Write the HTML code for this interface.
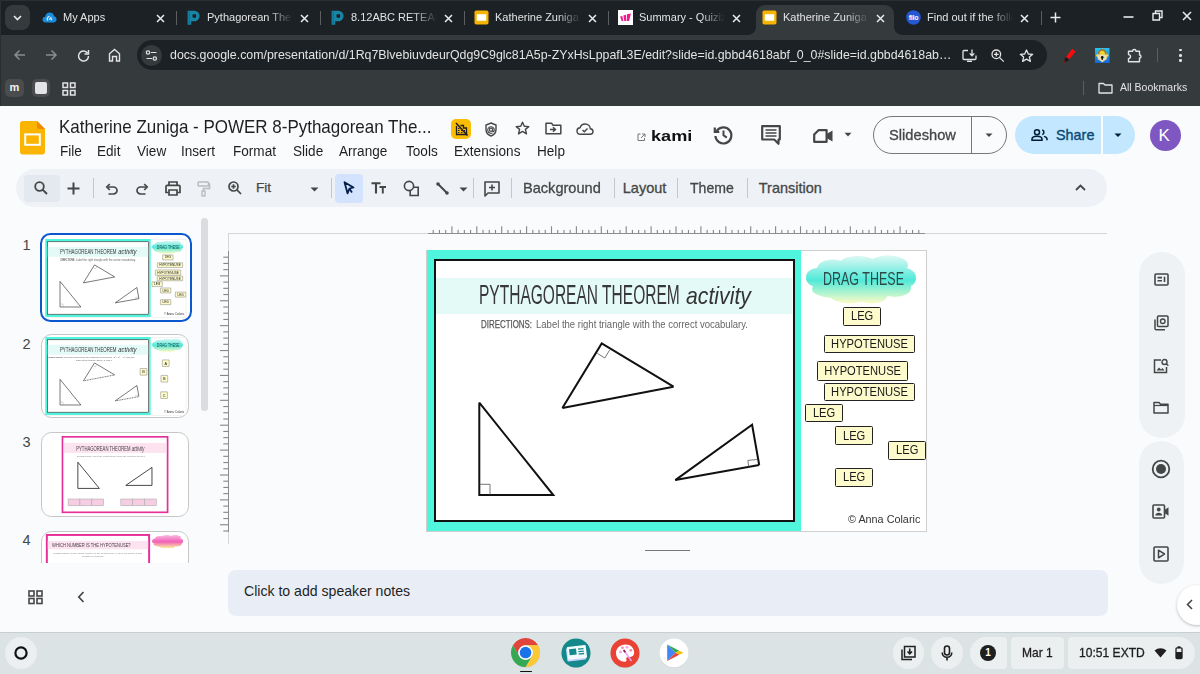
<!DOCTYPE html>
<html><head><meta charset="utf-8"><style>
*{box-sizing:border-box;margin:0;padding:0}
html,body{width:1200px;height:674px;overflow:hidden;background:#f9fbfd;font-family:"Liberation Sans",sans-serif}
.a{position:absolute}
.t{position:absolute;white-space:nowrap;line-height:1}
svg{position:absolute;overflow:visible}
</style></head><body>
<div class="a" style="left:0px;top:0px;width:1200px;height:35px;background:#1b2124;border-radius:0;"></div>
<div class="a" style="left:0px;top:0px;width:1200px;height:1px;background:#2a2f31;border-radius:0;"></div>
<div class="a" style="left:0px;top:0px;width:1px;height:35px;background:#2a2f31;border-radius:0;"></div>
<div class="a" style="left:5px;top:5px;width:25px;height:25px;background:#353a3d;border-radius:8px;"></div>
<svg style="left:13px;top:15px" width="9" height="6" viewBox="0 0 9 6"><path d="M1 1L4.5 4.5L8 1" fill="none" stroke="#e8eaed" stroke-width="1.6"/></svg>
<div class="a" style="left:756px;top:5px;width:138px;height:31px;background:#353a3d;border-radius:9px 9px 0 0;"></div>
<div class="a" style="left:748px;top:27px;width:8px;height:8px;background:radial-gradient(circle at 0 0,transparent 7.5px,#353a3d 8.2px)"></div>
<div class="a" style="left:894px;top:27px;width:8px;height:8px;background:radial-gradient(circle at 100% 0,transparent 7.5px,#353a3d 8.2px)"></div>
<svg style="left:42px;top:10px" width="16" height="15" viewBox="0 0 16 15"><path d="M3.5 12.5C1.6 12.5 0.5 11.2 0.5 9.6C0.5 8 1.7 6.9 3.2 6.8C3.5 4.3 5.3 2.5 7.8 2.5C10.1 2.5 11.8 4.1 12.2 6.2C13.6 6.5 14.6 7.7 14.6 9.3C14.6 11.1 13.2 12.5 11.4 12.5Z" fill="#1a8ce0"/><path d="M5.5 10.5C5 9 5.8 7 7.5 6.3M7 9.6L9.4 7.3M8.8 10.2L10 8.6" stroke="#dff0ff" stroke-width="1.2" fill="none"/></svg>
<div class="t" style="left:63px;top:11.6px;font-size:11px;color:#e3e3e3;width:86px;overflow:hidden;-webkit-mask-image:linear-gradient(90deg,#000 72%,transparent 100%)">My Apps</div>
<svg style="left:156px;top:14px" width="9" height="9" viewBox="0 0 9 9"><path d="M1 1L8 8M8 1L1 8" stroke="#e8eaed" stroke-width="1.5"/></svg>
<svg style="left:186px;top:10px" width="15" height="15" viewBox="0 0 15 15"><path d="M1.6 0.8H8.4A5.2 5.2 0 0 1 8.4 11.2H5.2V14.8H1.6Z" fill="#1984a6"/><circle cx="8.3" cy="6" r="2" fill="#1b2124"/><path d="M3.3 1.5V14" stroke="#106b88" stroke-width="0.8"/></svg>
<div class="t" style="left:207px;top:11.6px;font-size:11px;color:#e3e3e3;width:86px;overflow:hidden;-webkit-mask-image:linear-gradient(90deg,#000 72%,transparent 100%)">Pythagorean The</div>
<svg style="left:300px;top:14px" width="9" height="9" viewBox="0 0 9 9"><path d="M1 1L8 8M8 1L1 8" stroke="#e8eaed" stroke-width="1.5"/></svg>
<svg style="left:330px;top:10px" width="15" height="15" viewBox="0 0 15 15"><path d="M1.6 0.8H8.4A5.2 5.2 0 0 1 8.4 11.2H5.2V14.8H1.6Z" fill="#1984a6"/><circle cx="8.3" cy="6" r="2" fill="#1b2124"/><path d="M3.3 1.5V14" stroke="#106b88" stroke-width="0.8"/></svg>
<div class="t" style="left:351px;top:11.6px;font-size:11px;color:#e3e3e3;width:86px;overflow:hidden;-webkit-mask-image:linear-gradient(90deg,#000 72%,transparent 100%)">8.12ABC RETEACH</div>
<svg style="left:444px;top:14px" width="9" height="9" viewBox="0 0 9 9"><path d="M1 1L8 8M8 1L1 8" stroke="#e8eaed" stroke-width="1.5"/></svg>
<svg style="left:474px;top:10px" width="15" height="15" viewBox="0 0 15 15"><rect x="0.5" y="0.5" width="14" height="14" rx="1.8" fill="#f6b400"/><rect x="2.8" y="4.2" width="9.4" height="6.6" fill="#fff"/></svg>
<div class="t" style="left:495px;top:11.6px;font-size:11px;color:#e3e3e3;width:86px;overflow:hidden;-webkit-mask-image:linear-gradient(90deg,#000 72%,transparent 100%)">Katherine Zuniga</div>
<svg style="left:588px;top:14px" width="9" height="9" viewBox="0 0 9 9"><path d="M1 1L8 8M8 1L1 8" stroke="#e8eaed" stroke-width="1.5"/></svg>
<svg style="left:618px;top:10px" width="15" height="15" viewBox="0 0 15 15"><rect x="0" y="0" width="15" height="15" fill="#fff"/><path d="M2.1 6.6L4.3 6L5.3 10.9L3.7 10.9Z M5.4 5.4L7.9 4.8L8.2 10.9L6.3 10.9Z M8.9 4.2L12.9 3.6L11.1 10.9L8.8 10.9Z" fill="#f2178d"/></svg>
<div class="t" style="left:639px;top:11.6px;font-size:11px;color:#e3e3e3;width:86px;overflow:hidden;-webkit-mask-image:linear-gradient(90deg,#000 72%,transparent 100%)">Summary - Quizizz</div>
<svg style="left:732px;top:14px" width="9" height="9" viewBox="0 0 9 9"><path d="M1 1L8 8M8 1L1 8" stroke="#e8eaed" stroke-width="1.5"/></svg>
<svg style="left:762px;top:10px" width="15" height="15" viewBox="0 0 15 15"><rect x="0.5" y="0.5" width="14" height="14" rx="1.8" fill="#f6b400"/><rect x="2.8" y="4.2" width="9.4" height="6.6" fill="#fff"/></svg>
<div class="t" style="left:783px;top:11.6px;font-size:11px;color:#e3e3e3;width:86px;overflow:hidden;-webkit-mask-image:linear-gradient(90deg,#000 72%,transparent 100%)">Katherine Zuniga</div>
<svg style="left:876px;top:14px" width="9" height="9" viewBox="0 0 9 9"><path d="M1 1L8 8M8 1L1 8" stroke="#e8eaed" stroke-width="1.5"/></svg>
<svg style="left:906px;top:10px" width="15" height="15" viewBox="0 0 15 15"><circle cx="7.5" cy="7.5" r="7.3" fill="#2358d2"/><text x="7.6" y="10" font-size="7" font-family="Liberation Sans" font-weight="bold" fill="#fff" text-anchor="middle" letter-spacing="-0.2">filo</text></svg>
<div class="t" style="left:927px;top:11.6px;font-size:11px;color:#e3e3e3;width:86px;overflow:hidden;-webkit-mask-image:linear-gradient(90deg,#000 72%,transparent 100%)">Find out if the following</div>
<svg style="left:1020px;top:14px" width="9" height="9" viewBox="0 0 9 9"><path d="M1 1L8 8M8 1L1 8" stroke="#e8eaed" stroke-width="1.5"/></svg>
<div class="a" style="left:176px;top:11px;width:1px;height:14px;background:#5b5f62;border-radius:0;"></div>
<div class="a" style="left:320px;top:11px;width:1px;height:14px;background:#5b5f62;border-radius:0;"></div>
<div class="a" style="left:464px;top:11px;width:1px;height:14px;background:#5b5f62;border-radius:0;"></div>
<div class="a" style="left:608px;top:11px;width:1px;height:14px;background:#5b5f62;border-radius:0;"></div>
<div class="a" style="left:1041px;top:11px;width:1px;height:14px;background:#5b5f62;border-radius:0;"></div>
<svg style="left:1050px;top:12px" width="11" height="11" viewBox="0 0 11 11"><path d="M5.5 0.5V10.5M0.5 5.5H10.5" stroke="#e8eaed" stroke-width="1.5"/></svg>
<svg style="left:1123px;top:16px" width="11" height="2" viewBox="0 0 11 2"><path d="M0.5 1H10.5" stroke="#e8eaed" stroke-width="1.6"/></svg>
<svg style="left:1152px;top:10px" width="11" height="11" viewBox="0 0 11 11"><path d="M1 3.5H7.5V10H1Z M3.5 3.5V1H10V7.5H7.5" fill="none" stroke="#e8eaed" stroke-width="1.4"/></svg>
<svg style="left:1182px;top:11px" width="10" height="10" viewBox="0 0 10 10"><path d="M1 1L9 9M9 1L1 9" stroke="#e8eaed" stroke-width="1.6"/></svg>
<div class="a" style="left:0px;top:35px;width:1200px;height:71px;background:#353a3d;border-radius:0;"></div>
<div class="a" style="left:0px;top:35px;width:1px;height:71px;background:#2a2e30;border-radius:0;"></div>
<svg style="left:13px;top:49px" width="13" height="12" viewBox="0 0 13 12"><path d="M12 6H2M6.5 1.5L2 6L6.5 10.5" fill="none" stroke="#8a8d90" stroke-width="1.5"/></svg>
<svg style="left:45px;top:49px" width="13" height="12" viewBox="0 0 13 12"><path d="M1 6H11M6.5 1.5L11 6L6.5 10.5" fill="none" stroke="#8a8d90" stroke-width="1.5"/></svg>
<svg style="left:77px;top:49px" width="13" height="13" viewBox="0 0 13 13"><path d="M10.6 4.2A5 5 0 1 0 11.5 7" fill="none" stroke="#e3e3e3" stroke-width="1.5"/><path d="M11.5 1V5H7.5" fill="none" stroke="#e3e3e3" stroke-width="1.5"/></svg>
<svg style="left:108px;top:48px" width="13" height="14" viewBox="0 0 13 14"><path d="M1.5 13V5.8L6.5 1.5L11.5 5.8V13H8.5V8.5H4.5V13Z" fill="none" stroke="#e3e3e3" stroke-width="1.4"/></svg>
<div class="a" style="left:137px;top:40px;width:910px;height:30px;background:#1b2124;border-radius:15px;"></div>
<div class="a" style="left:141px;top:45px;width:21px;height:21px;background:#353a3d;border-radius:50%;"></div>
<svg style="left:145px;top:49px" width="13" height="13" viewBox="0 0 13 13"><circle cx="3" cy="3.5" r="1.7" fill="none" stroke="#e3e3e3" stroke-width="1.2"/><path d="M6 3.5H11.5M1.5 9.5H7" stroke="#e3e3e3" stroke-width="1.2"/><circle cx="9.8" cy="9.5" r="1.7" fill="none" stroke="#e3e3e3" stroke-width="1.2"/></svg>
<div class="t" style="left:169.5px;top:48.09px;font-size:13.6px;color:#e3e3e3;font-weight:normal;transform:scaleX(0.91);transform-origin:0 0;">docs.google.com/presentation/d/1Rq7BlvebiuvdeurQdg9C9glc81A5p-ZYxHsLppafL3E/edit?slide=id.gbbd4618abf_0_0#slide=id.gbbd4618ab…</div>
<svg style="left:962px;top:49px" width="16" height="13" viewBox="0 0 16 13"><path d="M6 1.5H2C1.5 1.5 1 2 1 2.5V9.5C1 10 1.5 10.5 2 10.5H13C13.5 10.5 14 10 14 9.5V6.5" fill="none" stroke="#e3e3e3" stroke-width="1.3"/><path d="M5 12.3H10" stroke="#e3e3e3" stroke-width="1.4"/><path d="M10 0.5V6.5M7.7 4.4L10 6.8L12.3 4.4" fill="none" stroke="#e3e3e3" stroke-width="1.3"/></svg>
<svg style="left:991px;top:49px" width="14" height="13" viewBox="0 0 14 13"><circle cx="5.3" cy="5.3" r="4.3" fill="none" stroke="#e3e3e3" stroke-width="1.3"/><path d="M8.4 8.4L12.8 12.6M5.3 3V7.6M3 5.3H7.6" stroke="#e3e3e3" stroke-width="1.3"/></svg>
<svg style="left:1019px;top:49px" width="15" height="13" viewBox="0 0 15 13"><path d="M7.5 1L9.3 5L13.7 5.3L10.4 8.1L11.4 12.4L7.5 10.1L3.6 12.4L4.6 8.1L1.3 5.3L5.7 5Z" fill="none" stroke="#e3e3e3" stroke-width="1.3" stroke-linejoin="round"/></svg>
<svg style="left:1064px;top:48px" width="12" height="15" viewBox="0 0 12 15"><path d="M8.3 0.8L11.6 3.4L5.2 11.6L1.9 9Z" fill="#f50d0d"/><path d="M1.9 9L5.2 11.6L3.2 13.6L0.6 12.9L0.9 10.4Z" fill="#1a1a1a"/><path d="M0.6 12.9L0.3 14.3L1.8 14" stroke="#8c1014" stroke-width="1"/></svg>
<svg style="left:1094.5px;top:48px" width="14.5" height="15" viewBox="0 0 14.5 15"><defs><linearGradient id="lkbg" x1="0" y1="0" x2="0" y2="1"><stop offset="0" stop-color="#27c4f4"/><stop offset="1" stop-color="#1766d6"/></linearGradient></defs><rect x="0" y="0" width="14.5" height="15" fill="url(#lkbg)"/><path d="M7.25 0.5L13.8 7.5L7.25 14.5L0.7 7.5Z" fill="#f3d32a"/><path d="M3.8 7V5.3A3.45 3.45 0 0 1 10.7 5.3V7" fill="none" stroke="#9b7a3a" stroke-width="1.6"/><path d="M2.8 6.5H11.7V11.3L7.25 14L2.8 11.3Z" fill="#eadcae"/><circle cx="7.25" cy="9.2" r="1.3" fill="#111"/><path d="M7.25 9.5V12" stroke="#111" stroke-width="1.2"/></svg>
<svg style="left:1127px;top:48.5px" width="15" height="14" viewBox="0 0 15 14"><path d="M1.5 2.2H5.6A1.7 1.7 0 0 1 9 2.2H12.5V6A1.5 1.5 0 0 1 12.5 9V12.8H1.5V9.6A2 2 0 0 0 1.5 5.6Z" fill="none" stroke="#e3e3e3" stroke-width="1.4" stroke-linejoin="round"/></svg>
<div class="a" style="left:1157px;top:48px;width:1px;height:14px;background:#5b5f62;border-radius:0;"></div>
<div class="a" style="left:1179.3px;top:48.7px;width:2.7px;height:2.7px;border-radius:50%;background:#e3e3e3"></div>
<div class="a" style="left:1179.3px;top:54.0px;width:2.7px;height:2.7px;border-radius:50%;background:#e3e3e3"></div>
<div class="a" style="left:1179.3px;top:59.2px;width:2.7px;height:2.7px;border-radius:50%;background:#e3e3e3"></div>
<div class="a" style="left:5px;top:79px;width:19px;height:18px;background:#4a4c4e;border-radius:5px;"></div>
<div class="t" style="left:9.5px;top:81.99px;font-size:11px;color:#fff;font-weight:normal;"><b style="color:#f1f1f1">m</b></div>
<div class="a" style="left:32px;top:79px;width:18px;height:18px;background:#4a4c4e;border-radius:5px;"></div>
<div class="a" style="left:35px;top:82px;width:12px;height:12px;background:#e1e3e6;border-radius:2px;"></div>
<svg style="left:62px;top:82px" width="14" height="14" viewBox="0 0 14 14"><rect x="1" y="1" width="4.5" height="4.5" fill="none" stroke="#e3e3e3" stroke-width="1.5"/><rect x="8.5" y="1" width="4.5" height="4.5" fill="none" stroke="#e3e3e3" stroke-width="1.5"/><rect x="1" y="8.5" width="4.5" height="4.5" fill="none" stroke="#e3e3e3" stroke-width="1.5"/><rect x="8.5" y="8.5" width="4.5" height="4.5" fill="none" stroke="#e3e3e3" stroke-width="1.5"/></svg>
<div class="a" style="left:1083px;top:81px;width:1px;height:14px;background:#5b5f62;border-radius:0;"></div>
<svg style="left:1098px;top:82px" width="15" height="12" viewBox="0 0 15 12"><path d="M1 1.5H5.5L7 3H14V11H1Z" fill="none" stroke="#e3e3e3" stroke-width="1.3" stroke-linejoin="round"/></svg>
<div class="t" style="left:1119.5px;top:82.18px;font-size:11.3px;color:#e3e3e3;font-weight:normal;transform:scaleX(0.93);transform-origin:0 0;">All Bookmarks</div>
<div class="a" style="left:0px;top:106px;width:1200px;height:526px;background:#f9fbfd;border-radius:0;"></div>
<svg style="left:20px;top:121px" width="25" height="34" viewBox="0 0 25 34"><path d="M2.5 0H17L25 8V31C25 32.4 23.9 33.5 22.5 33.5H2.5C1.1 33.5 0 32.4 0 31V2.5C0 1.1 1.1 0 2.5 0Z" fill="#fbb400"/><path d="M17 0L25 8H19C17.9 8 17 7.1 17 6Z" fill="#f08a00"/><rect x="5.2" y="13.4" width="14.6" height="10.4" fill="none" stroke="#fff" stroke-width="2"/></svg>
<div class="t" style="left:59px;top:119.18px;font-size:17.8px;color:#1f1f1f;font-weight:normal;transform:scaleX(0.955);transform-origin:0 0;">Katherine Zuniga - POWER 8-Pythagorean The...</div>
<div class="t" style="left:60px;top:144.45px;font-size:14px;color:#1f1f1f;font-weight:normal;transform:scaleX(0.97);transform-origin:0 0;">File</div>
<div class="t" style="left:97px;top:144.45px;font-size:14px;color:#1f1f1f;font-weight:normal;transform:scaleX(0.97);transform-origin:0 0;">Edit</div>
<div class="t" style="left:137px;top:144.45px;font-size:14px;color:#1f1f1f;font-weight:normal;transform:scaleX(0.97);transform-origin:0 0;">View</div>
<div class="t" style="left:181px;top:144.45px;font-size:14px;color:#1f1f1f;font-weight:normal;transform:scaleX(0.97);transform-origin:0 0;">Insert</div>
<div class="t" style="left:233px;top:144.45px;font-size:14px;color:#1f1f1f;font-weight:normal;transform:scaleX(0.97);transform-origin:0 0;">Format</div>
<div class="t" style="left:293px;top:144.45px;font-size:14px;color:#1f1f1f;font-weight:normal;transform:scaleX(0.97);transform-origin:0 0;">Slide</div>
<div class="t" style="left:339px;top:144.45px;font-size:14px;color:#1f1f1f;font-weight:normal;transform:scaleX(0.97);transform-origin:0 0;">Arrange</div>
<div class="t" style="left:406px;top:144.45px;font-size:14px;color:#1f1f1f;font-weight:normal;transform:scaleX(0.97);transform-origin:0 0;">Tools</div>
<div class="t" style="left:454px;top:144.45px;font-size:14px;color:#1f1f1f;font-weight:normal;transform:scaleX(0.97);transform-origin:0 0;">Extensions</div>
<div class="t" style="left:537px;top:144.45px;font-size:14px;color:#1f1f1f;font-weight:normal;transform:scaleX(0.97);transform-origin:0 0;">Help</div>
<div class="a" style="left:451px;top:119px;width:20px;height:20px;background:#fbbc04;border-radius:5px;"></div>
<svg style="left:455px;top:122px" width="13" height="14" viewBox="0 0 13 14"><path d="M1.5 4V12.5H11.5V6H8.5V3.5H5.5" fill="none" stroke="#1f1f1f" stroke-width="1.3"/><path d="M3 6.5H4.5M3 8.5H4.5M3 10.5H4.5M6 8.5H7.5M6 10.5H7.5M9 8.5H10" stroke="#1f1f1f" stroke-width="1.2"/><path d="M1 1L12.5 13.5" stroke="#1f1f1f" stroke-width="1.5"/></svg>
<svg style="left:485px;top:122px" width="12" height="15" viewBox="0 0 12 15"><path d="M6 1L11 3V7.5C11 10.5 8.8 13 6 14C3.2 13 1 10.5 1 7.5V3Z" fill="none" stroke="#444746" stroke-width="1.4"/><circle cx="6" cy="7.8" r="1.6" fill="none" stroke="#444746" stroke-width="1.2"/><path d="M7.6 7.8V9C7.6 10 9.3 10 9.3 8.2A3.3 3.3 0 1 0 7.5 11" fill="none" stroke="#444746" stroke-width="1.1"/></svg>
<svg style="left:515px;top:121px" width="15" height="14" viewBox="0 0 15 14"><path d="M7.5 1.2L9.3 5.3L13.8 5.6L10.4 8.4L11.5 12.8L7.5 10.4L3.5 12.8L4.6 8.4L1.2 5.6L5.7 5.3Z" fill="none" stroke="#444746" stroke-width="1.4" stroke-linejoin="round"/></svg>
<svg style="left:545px;top:122px" width="17" height="13" viewBox="0 0 17 13"><path d="M1 2V11.8H15.8V3.3H8L6.6 1.2H1Z" fill="none" stroke="#444746" stroke-width="1.5" stroke-linejoin="round"/><path d="M5 7.5H10M8 5.3L10.4 7.5L8 9.7" fill="none" stroke="#444746" stroke-width="1.5"/></svg>
<svg style="left:576px;top:123px" width="18" height="12" viewBox="0 0 18 12"><path d="M4.5 11.2C2.5 11.2 1 9.8 1 7.9C1 6.1 2.4 4.8 4.1 4.7C4.8 2.5 6.8 1 9.1 1C11.9 1 14.1 3.1 14.3 5.7C15.9 5.9 17 7.1 17 8.5C17 10 15.8 11.2 14.2 11.2Z" fill="none" stroke="#444746" stroke-width="1.4"/><path d="M6.5 7L8.3 8.7L11.5 5.5" fill="none" stroke="#444746" stroke-width="1.4"/></svg>
<svg style="left:637px;top:133px" width="9" height="8" viewBox="0 0 9 8"><path d="M3.5 1H1V7.5H7.5V5M5 1H8V4M8 1L4 5" fill="none" stroke="#777" stroke-width="1"/></svg>
<div class="t" style="left:650.5px;top:127.68px;font-size:15.5px;color:#111;font-weight:bold;transform:scaleX(1.17);transform-origin:0 0;">kami</div>
<svg style="left:713px;top:125px" width="21" height="20" viewBox="0 0 21 20"><path d="M3.6 6.2A8 8 0 1 1 2.4 11" fill="none" stroke="#444746" stroke-width="2.2"/><path d="M1.8 2.5V7H6.3" fill="none" stroke="#444746" stroke-width="2.2"/><path d="M10.5 5.5V10.2L13.8 12.6" fill="none" stroke="#444746" stroke-width="2"/></svg>
<svg style="left:761px;top:125px" width="21" height="20" viewBox="0 0 21 20"><path d="M1.2 1.2H18.8V14.5H17.5V18.8L13.2 14.5H1.2Z" fill="none" stroke="#444746" stroke-width="2.2" stroke-linejoin="round"/><path d="M4.5 5H15.5M4.5 8H15.5M4.5 11H15.5" stroke="#444746" stroke-width="1.6"/></svg>
<svg style="left:813px;top:129px" width="21" height="14" viewBox="0 0 21 14"><path d="M5.5 1.2H13.6V12.8H1.2V5.5Z" fill="none" stroke="#444746" stroke-width="2.2" stroke-linejoin="round"/><path d="M13.6 5L19.5 1.5V12.5L13.6 9Z" fill="#444746"/></svg>
<svg style="left:844px;top:132px" width="8" height="5" viewBox="0 0 8 5"><path d="M0.5 0.8H7.5L4 4.5Z" fill="#444746"/></svg>
<div class="a" style="left:873px;top:116px;width:134px;height:38px;border:1px solid #747775;border-radius:19px"></div>
<div class="a" style="left:971px;top:116px;width:1px;height:38px;background:#747775;border-radius:0;"></div>
<div class="t" style="left:889.3px;top:128.21px;font-size:14.4px;color:#444746;font-weight:normal;transform:scaleX(1.02);transform-origin:0 0;-webkit-text-stroke:0.3px #444746">Slideshow</div>
<svg style="left:984.5px;top:133px" width="8" height="5" viewBox="0 0 8 5"><path d="M0.5 0.5H7.5L4 4Z" fill="#444746"/></svg>
<div class="a" style="left:1015px;top:116px;width:120px;height:38px;background:#c2e7ff;border-radius:19px;"></div>
<div class="a" style="left:1101px;top:116px;width:1.5px;height:38px;background:#f9fbfd;border-radius:0;"></div>
<svg style="left:1031px;top:129px" width="17" height="12" viewBox="0 0 17 12"><circle cx="6" cy="3.3" r="2.5" fill="none" stroke="#001d35" stroke-width="1.5"/><path d="M1 11.2V10C1 8.2 3 7.2 6 7.2C9 7.2 11 8.2 11 10V11.2Z" fill="none" stroke="#001d35" stroke-width="1.5"/><path d="M11.2 1A2.4 2.4 0 0 1 11.2 5.6M13 7.4C14.8 7.9 16 8.8 16 10V11.2" fill="none" stroke="#001d35" stroke-width="1.5"/></svg>
<div class="t" style="left:1056px;top:128.01px;font-size:14.4px;color:#0b4a75;font-weight:normal;-webkit-text-stroke:0.35px #0b4a75">Share</div>
<svg style="left:1114px;top:133px" width="8" height="5" viewBox="0 0 8 5"><path d="M0.5 0.5H7.5L4 4Z" fill="#001d35"/></svg>
<div class="a" style="left:1150px;top:119.5px;width:31px;height:31px;background:#7e57c2;border-radius:50%;"></div>
<div class="t" style="left:1158.5px;top:127.11px;font-size:17px;color:#fff;font-weight:normal;">K</div>
<div class="a" style="left:16px;top:169px;width:1091px;height:38px;background:#eef1f6;border-radius:19px;"></div>
<div class="a" style="left:24px;top:175px;width:36px;height:27px;background:#e4e8ef;border-radius:4px;"></div>
<svg style="left:34px;top:181px" width="14" height="14" viewBox="0 0 14 14"><circle cx="5.5" cy="5.5" r="4.3" fill="none" stroke="#444746" stroke-width="1.8"/><path d="M8.6 8.6L13 13" stroke="#444746" stroke-width="2"/></svg>
<svg style="left:67px;top:182px" width="13" height="13" viewBox="0 0 13 13"><path d="M6.5 0.5V12.5M0.5 6.5H12.5" stroke="#444746" stroke-width="2"/></svg>
<div class="a" style="left:92.5px;top:178px;width:1px;height:20px;background:#c7c7c7;border-radius:0;"></div>
<svg style="left:105px;top:183px" width="13" height="12" viewBox="0 0 13 12"><path d="M3 4H8.5A3.5 3.5 0 0 1 8.5 11H3.5" fill="none" stroke="#444746" stroke-width="1.7"/><path d="M4.8 1L1.8 4L4.8 7" fill="none" stroke="#444746" stroke-width="1.7"/></svg>
<svg style="left:136px;top:183px" width="13" height="12" viewBox="0 0 13 12"><path d="M10 4H4.5A3.5 3.5 0 0 0 4.5 11H9.5" fill="none" stroke="#444746" stroke-width="1.7"/><path d="M8.2 1L11.2 4L8.2 7" fill="none" stroke="#444746" stroke-width="1.7"/></svg>
<svg style="left:165px;top:181px" width="16" height="15" viewBox="0 0 16 15"><path d="M4 4.5V1H12V4.5" fill="none" stroke="#444746" stroke-width="1.7"/><path d="M3.5 11.5H1V5.5C1 4.9 1.5 4.4 2.1 4.4H13.9C14.5 4.4 15 4.9 15 5.5V11.5H12.5" fill="none" stroke="#444746" stroke-width="1.7"/><path d="M4 9H12V14H4Z" fill="none" stroke="#444746" stroke-width="1.7"/></svg>
<svg style="left:197px;top:181px" width="13" height="16" viewBox="0 0 13 16"><rect x="1" y="1" width="10.5" height="4" rx="0.8" fill="none" stroke="#b9bcbe" stroke-width="1.5"/><path d="M11.5 3H12.5V7.5H6.5V10" fill="none" stroke="#b9bcbe" stroke-width="1.5"/><rect x="5" y="10" width="3" height="5" rx="0.6" fill="none" stroke="#b9bcbe" stroke-width="1.4"/></svg>
<svg style="left:228px;top:181px" width="14" height="14" viewBox="0 0 14 14"><circle cx="5.5" cy="5.5" r="4.5" fill="none" stroke="#444746" stroke-width="1.7"/><path d="M8.7 8.7L13 13M5.5 3.2V7.8M3.2 5.5H7.8" stroke="#444746" stroke-width="1.7"/></svg>
<div class="t" style="left:256px;top:181.19px;font-size:13.6px;color:#444746;font-weight:normal;-webkit-text-stroke:0.25px #444746">Fit</div>
<svg style="left:309.5px;top:186.5px" width="9" height="5" viewBox="0 0 9 5"><path d="M0.5 0.5H8.5L4.5 4.5Z" fill="#444746"/></svg>
<div class="a" style="left:330.5px;top:178px;width:1px;height:20px;background:#c7c7c7;border-radius:0;"></div>
<div class="a" style="left:335px;top:174px;width:28px;height:28.5px;background:#d3e3fd;border-radius:4px;"></div>
<svg style="left:343px;top:181px" width="12" height="14" viewBox="0 0 12 14"><path d="M1.5 1.2L10.5 6.5L6.5 7.5L4.5 12.3Z" fill="none" stroke="#041e49" stroke-width="1.8" stroke-linejoin="round"/><path d="M6.3 7.5L9 11.5" stroke="#041e49" stroke-width="1.8"/></svg>
<svg style="left:371px;top:182px" width="16" height="12" viewBox="0 0 16 12"><path d="M0.5 1.2H9.5M5 1.2V11.5" stroke="#444746" stroke-width="2.1"/><path d="M8.5 5H15M11.8 5V11.5" stroke="#444746" stroke-width="1.9"/></svg>
<svg style="left:403px;top:180px" width="17" height="17" viewBox="0 0 17 17"><circle cx="6" cy="6" r="4.6" fill="none" stroke="#444746" stroke-width="1.6"/><path d="M10 7.3H15.2V15.5H7.2V10.5" fill="none" stroke="#444746" stroke-width="1.6"/></svg>
<svg style="left:436px;top:182px" width="13" height="13" viewBox="0 0 13 13"><path d="M2 2L11 11" stroke="#444746" stroke-width="2"/><circle cx="2" cy="2" r="1.8" fill="#444746"/><circle cx="11" cy="11" r="1.8" fill="#444746"/></svg>
<svg style="left:458.5px;top:186.5px" width="9" height="5" viewBox="0 0 9 5"><path d="M0.5 0.5H8.5L4.5 4.5Z" fill="#444746"/></svg>
<div class="a" style="left:473px;top:178px;width:1px;height:20px;background:#c7c7c7;border-radius:0;"></div>
<svg style="left:483.5px;top:181px" width="16" height="16" viewBox="0 0 16 16"><path d="M1 1H15V12H4L1 15Z" fill="none" stroke="#444746" stroke-width="1.6" stroke-linejoin="round"/><path d="M8 3.5V9.5M5 6.5H11" stroke="#444746" stroke-width="1.6"/></svg>
<div class="a" style="left:510.5px;top:178px;width:1px;height:20px;background:#c7c7c7;border-radius:0;"></div>
<div class="t" style="left:523.3px;top:180.73px;font-size:14.5px;color:#444746;font-weight:normal;transform:scaleX(1.005);transform-origin:0 0;-webkit-text-stroke:0.3px #444746">Background</div>
<div class="a" style="left:613.5px;top:178px;width:1px;height:20px;background:#c7c7c7;border-radius:0;"></div>
<div class="t" style="left:622.8px;top:180.73px;font-size:14.5px;color:#444746;font-weight:normal;-webkit-text-stroke:0.3px #444746">Layout</div>
<div class="a" style="left:677px;top:178px;width:1px;height:20px;background:#c7c7c7;border-radius:0;"></div>
<div class="t" style="left:689.8px;top:180.73px;font-size:14.5px;color:#444746;font-weight:normal;transform:scaleX(0.97);transform-origin:0 0;-webkit-text-stroke:0.3px #444746">Theme</div>
<div class="a" style="left:746.5px;top:178px;width:1px;height:20px;background:#c7c7c7;border-radius:0;"></div>
<div class="t" style="left:758.8px;top:180.73px;font-size:14.5px;color:#444746;font-weight:normal;-webkit-text-stroke:0.3px #444746">Transition</div>
<svg style="left:1075px;top:184px" width="11" height="7" viewBox="0 0 11 7"><path d="M1 6L5.5 1.5L10 6" fill="none" stroke="#444746" stroke-width="1.8"/></svg>
<div class="t" style="left:22.5px;top:237.93px;font-size:14.5px;color:#444746;font-weight:normal;">1</div>
<div class="t" style="left:22.5px;top:337.03px;font-size:14.5px;color:#444746;font-weight:normal;">2</div>
<div class="t" style="left:22.5px;top:434.93px;font-size:14.5px;color:#444746;font-weight:normal;">3</div>
<div class="t" style="left:22.5px;top:533.03px;font-size:14.5px;color:#444746;font-weight:normal;">4</div>
<div class="a" style="left:40px;top:233px;width:151.5px;height:89.00px;"><div class="a" style="left:0;top:0;width:151.5px;height:89px;border:2.8px solid #0b57d0;border-radius:10.5px;background:#fff"></div><div class="a" style="left:2.8px;top:2.8px;width:145.90px;height:83.40px;border-radius:7.70px;overflow:hidden"><div class="a" style="left:2.30px;top:3.10px;width:501px;height:282px;transform:scale(0.2818,0.2775);transform-origin:0 0"><div class="a" style="left:0;top:0;width:501px;height:282px;background:#fff;border:1px solid #cfcfcf"></div><div class="a" style="left:1px;top:0px;width:374px;height:281px;background:#50f5de"></div><div class="a" style="left:8px;top:9px;width:361px;height:263px;background:#fff;border:2.2px solid #111"></div><div class="a" style="left:10px;top:28px;width:356px;height:35.5px;background:#e3faf7"></div><div class="t" style="left:53.3px;top:32.1px;font-size:27px;color:#383838;transform:scaleX(0.575);transform-origin:0 0">PYTHAGOREAN THEOREM</div><div class="t" style="left:260px;top:33.9px;font-size:24px;color:#333;font-style:italic;transform:scaleX(0.885);transform-origin:0 0">activity</div><div class="t" style="left:54.9px;top:69.1px;font-size:11px;color:#555;-webkit-text-stroke:0.25px #555;transform:scaleX(0.72);transform-origin:0 0">DIRECTIONS:</div><div class="t" style="left:109.6px;top:69.1px;font-size:11px;color:#666;transform:scaleX(0.865);transform-origin:0 0">Label the right triangle with the correct vocabulary.</div><svg style="left:0;top:0" width="501" height="282" viewBox="0 0 501 282"><g stroke-miterlimit="2.5"><path d="M53.3 152.7V245H127.3Z" fill="none" stroke="#111" stroke-width="2"/><path d="M53.8 234.3H64V244.5" fill="none" stroke="#666" stroke-width="0.9"/><path d="M136.4 158.1L175.7 93.4L247.5 136.7" fill="none" stroke="#111" stroke-width="2"/><path d="M136.4 158.1L247.5 136.7" fill="none" stroke="#111" stroke-width="2"/><path d="M171.4 103.4L178.75 108L183.7 100" fill="none" stroke="#666" stroke-width="0.9"/><path d="M249.3 230.1L326.1 174.8L333.2 215" fill="none" stroke="#111" stroke-width="2"/><path d="M249.3 230.1L333.2 215" fill="none" stroke="#111" stroke-width="2"/><path d="M321.9 210.4L331.3 209.5M322.6 216.5L321.9 210.4" fill="none" stroke="#666" stroke-width="0.9"/></g></svg><svg style="left:379.7px;top:4.5px" width="110" height="50" viewBox="0 0 110 50"><defs><linearGradient id="cg379450e9d9" gradientUnits="userSpaceOnUse" x1="0" y1="2" x2="0" y2="48"><stop offset="0" stop-color="#d6f7f3"/><stop offset="0.5" stop-color="#50e9d9"/><stop offset="1" stop-color="#fafbc6"/></linearGradient></defs><g fill="url(#cg379450e9d9)"><ellipse cx="55" cy="23" rx="50" ry="16"/><ellipse cx="27" cy="14" rx="16" ry="9.5"/><ellipse cx="52" cy="10" rx="20" ry="9"/><ellipse cx="82" cy="10" rx="20" ry="9.5"/><ellipse cx="11" cy="22.5" rx="11" ry="9.5"/><ellipse cx="99" cy="23" rx="11" ry="10"/><ellipse cx="28" cy="34" rx="22" ry="9"/><ellipse cx="62" cy="36" rx="26" ry="8.5"/><ellipse cx="89" cy="33" rx="16" ry="9"/><ellipse cx="44" cy="40" rx="20" ry="8.5"/><ellipse cx="66" cy="41" rx="15" ry="7.5"/></g></svg><div class="t" style="left:397.3px;top:19.7px;font-size:18.5px;color:#2b4a47;transform:scaleX(0.675);transform-origin:0 0">DRAG THESE</div><div class="a" style="left:417.3px;top:57px;width:38.2px;height:18.8px;background:#fdfacb;border:1.4px solid #222;border-radius:1.5px"></div><div class="t" style="left:417.3px;top:60.43px;width:42.44px;text-align:center;font-size:12.4px;color:#1a1a1a;transform:scaleX(0.9);transform-origin:0 0">LEG</div><div class="a" style="left:397.6px;top:84.5px;width:91px;height:18.4px;background:#fdfacb;border:1.4px solid #222;border-radius:1.5px"></div><div class="t" style="left:397.6px;top:87.73px;width:101.11px;text-align:center;font-size:12.4px;color:#1a1a1a;transform:scaleX(0.9);transform-origin:0 0">HYPOTENUSE</div><div class="a" style="left:390.5px;top:111px;width:91.2px;height:19.7px;background:#fdfacb;border:1.4px solid #222;border-radius:1.5px"></div><div class="t" style="left:390.5px;top:114.88px;width:101.33px;text-align:center;font-size:12.4px;color:#1a1a1a;transform:scaleX(0.9);transform-origin:0 0">HYPOTENUSE</div><div class="a" style="left:397.5px;top:132.5px;width:91px;height:18.5px;background:#fdfacb;border:1.4px solid #222;border-radius:1.5px"></div><div class="t" style="left:397.5px;top:135.78px;width:101.11px;text-align:center;font-size:12.4px;color:#1a1a1a;transform:scaleX(0.9);transform-origin:0 0">HYPOTENUSE</div><div class="a" style="left:379.4px;top:153.5px;width:38.1px;height:18.7px;background:#fdfacb;border:1.4px solid #222;border-radius:1.5px"></div><div class="t" style="left:379.4px;top:156.88px;width:42.33px;text-align:center;font-size:12.4px;color:#1a1a1a;transform:scaleX(0.9);transform-origin:0 0">LEG</div><div class="a" style="left:408.7px;top:176.2px;width:38.2px;height:19.2px;background:#fdfacb;border:1.4px solid #222;border-radius:1.5px"></div><div class="t" style="left:408.7px;top:179.83px;width:42.44px;text-align:center;font-size:12.4px;color:#1a1a1a;transform:scaleX(0.9);transform-origin:0 0">LEG</div><div class="a" style="left:461.6px;top:190.9px;width:38.4px;height:18.7px;background:#fdfacb;border:1.4px solid #222;border-radius:1.5px"></div><div class="t" style="left:461.6px;top:194.28px;width:42.67px;text-align:center;font-size:12.4px;color:#1a1a1a;transform:scaleX(0.9);transform-origin:0 0">LEG</div><div class="a" style="left:408.7px;top:218.1px;width:38.2px;height:18.7px;background:#fdfacb;border:1.4px solid #222;border-radius:1.5px"></div><div class="t" style="left:408.7px;top:221.48px;width:42.44px;text-align:center;font-size:12.4px;color:#1a1a1a;transform:scaleX(0.9);transform-origin:0 0">LEG</div><div class="t" style="left:421.6px;top:263.6px;font-size:10.5px;color:#333;transform:scaleX(1.03);transform-origin:0 0">© Anna Colaric</div></div></div></div>
<div class="a" style="left:41.4px;top:334px;width:148px;height:84.00px;"><div class="a" style="left:0;top:0;width:148px;height:84px;border:1px solid #c4c7c5;border-radius:10.5px;background:#fff"></div><div class="a" style="left:1px;top:1px;width:146.00px;height:82.00px;border-radius:9.50px;overflow:hidden"><div class="a" style="left:2.70px;top:2.30px;width:501px;height:282px;transform:scale(0.2818,0.2775);transform-origin:0 0"><div class="a" style="left:0;top:0;width:501px;height:282px;background:#fff;border:1px solid #cfcfcf"></div><div class="a" style="left:1px;top:0px;width:374px;height:281px;background:#50f5de"></div><div class="a" style="left:8px;top:9px;width:361px;height:263px;background:#fff;border:2.2px solid #111"></div><div class="a" style="left:10px;top:28px;width:356px;height:35.5px;background:#e3faf7"></div><div class="t" style="left:53.3px;top:32.1px;font-size:27px;color:#383838;transform:scaleX(0.575);transform-origin:0 0">PYTHAGOREAN THEOREM</div><div class="t" style="left:260px;top:33.9px;font-size:24px;color:#333;font-style:italic;transform:scaleX(0.885);transform-origin:0 0">activity</div><div class="t" style="left:12px;top:68px;font-size:9px;color:#5a5a5a;transform:scaleX(0.9);transform-origin:0 0"><b>DIRECTIONS:</b> Using the formula for the Pythagorean Theorem, a² + b² = c², label the</div><div class="t" style="left:110px;top:78px;font-size:9px;color:#5a5a5a;transform:scaleX(0.9);transform-origin:0 0">sides of the triangle with a, b, and c.</div><svg style="left:0;top:0" width="501" height="282" viewBox="0 0 501 282"><g stroke-miterlimit="2.5"><path d="M53.3 152.7V245H127.3Z" fill="none" stroke="#111" stroke-width="2"/><path d="M53.8 234.3H64V244.5" fill="none" stroke="#666" stroke-width="0.9"/><path d="M136.4 158.1L175.7 93.4L247.5 136.7" fill="none" stroke="#111" stroke-width="2"/><path d="M136.4 158.1L247.5 136.7" fill="none" stroke="#111" stroke-width="2" stroke-dasharray="4 2"/><path d="M171.4 103.4L178.75 108L183.7 100" fill="none" stroke="#666" stroke-width="0.9"/><path d="M249.3 230.1L326.1 174.8L333.2 215" fill="none" stroke="#111" stroke-width="2"/><path d="M249.3 230.1L333.2 215" fill="none" stroke="#111" stroke-width="2" stroke-dasharray="4 2"/><path d="M321.9 210.4L331.3 209.5M322.6 216.5L321.9 210.4" fill="none" stroke="#666" stroke-width="0.9"/></g></svg><svg style="left:379.7px;top:4.5px" width="110" height="50" viewBox="0 0 110 50"><defs><linearGradient id="cg379450e9d9" gradientUnits="userSpaceOnUse" x1="0" y1="2" x2="0" y2="48"><stop offset="0" stop-color="#d6f7f3"/><stop offset="0.5" stop-color="#50e9d9"/><stop offset="1" stop-color="#fafbc6"/></linearGradient></defs><g fill="url(#cg379450e9d9)"><ellipse cx="55" cy="23" rx="50" ry="16"/><ellipse cx="27" cy="14" rx="16" ry="9.5"/><ellipse cx="52" cy="10" rx="20" ry="9"/><ellipse cx="82" cy="10" rx="20" ry="9.5"/><ellipse cx="11" cy="22.5" rx="11" ry="9.5"/><ellipse cx="99" cy="23" rx="11" ry="10"/><ellipse cx="28" cy="34" rx="22" ry="9"/><ellipse cx="62" cy="36" rx="26" ry="8.5"/><ellipse cx="89" cy="33" rx="16" ry="9"/><ellipse cx="44" cy="40" rx="20" ry="8.5"/><ellipse cx="66" cy="41" rx="15" ry="7.5"/></g></svg><div class="t" style="left:397.3px;top:19.7px;font-size:18.5px;color:#2b4a47;transform:scaleX(0.675);transform-origin:0 0">DRAG THESE</div><div class="a" style="left:416px;top:82px;width:25px;height:25px;background:#fdfacb;border:1.4px solid #222;border-radius:1.5px"></div><div class="t" style="left:416px;top:87.76px;width:25.00px;text-align:center;font-size:14px;color:#1a1a1a;transform:scaleX(1.0);transform-origin:0 0">A</div><div class="a" style="left:411px;top:138px;width:25px;height:25px;background:#fdfacb;border:1.4px solid #222;border-radius:1.5px"></div><div class="t" style="left:411px;top:143.76px;width:25.00px;text-align:center;font-size:14px;color:#1a1a1a;transform:scaleX(1.0);transform-origin:0 0">B</div><div class="a" style="left:410px;top:197px;width:25px;height:25px;background:#fdfacb;border:1.4px solid #222;border-radius:1.5px"></div><div class="t" style="left:410px;top:202.76px;width:25.00px;text-align:center;font-size:14px;color:#1a1a1a;transform:scaleX(1.0);transform-origin:0 0">C</div><div class="a" style="left:337px;top:113px;width:25px;height:25px;background:#fdfacb;border:1.4px solid #222;border-radius:1.5px"></div><div class="t" style="left:337px;top:118.76px;width:25.00px;text-align:center;font-size:14px;color:#1a1a1a;transform:scaleX(1.0);transform-origin:0 0">B</div><div class="t" style="left:421.6px;top:263.6px;font-size:10.5px;color:#333;transform:scaleX(1.03);transform-origin:0 0">© Anna Colaric</div></div></div></div>
<div class="a" style="left:41.4px;top:432px;width:148px;height:85.30px;"><div class="a" style="left:0;top:0;width:148px;height:85.3px;border:1px solid #c4c7c5;border-radius:10.5px;background:#fff"></div><div class="a" style="left:1px;top:1px;width:146.00px;height:83.30px;border-radius:9.50px;overflow:hidden"><div class="a" style="left:2.70px;top:2.50px;width:501px;height:282px;transform:scale(0.2818,0.2775);transform-origin:0 0"><div class="a" style="left:0;top:0;width:501px;height:282px;background:#fff"></div><div class="a" style="left:59px;top:0px;width:379px;height:278px;background:#fff;border:6px solid #e5309a"></div><div class="a" style="left:68px;top:25px;width:362px;height:36px;background:#fde2f0"></div><div class="t" style="left:111px;top:33px;font-size:24px;color:#444;transform:scaleX(0.62);transform-origin:0 0">PYTHAGOREAN THEOREM <i>activity</i></div><div class="t" style="left:113px;top:68px;font-size:9px;color:#888;transform:scaleX(0.93);transform-origin:0 0">DIRECTIONS: Label the right triangle using the numbers below it.</div><svg style="left:0;top:0" width="501" height="282" viewBox="0 0 501 282"><path d="M116.6 94.4V188.9H192.9Z M286.6 178L379.6 113.1V178Z" fill="none" stroke="#333" stroke-width="3.2"/><g fill="#f6cde3" stroke="#aaa" stroke-width="2"><rect x="82" y="227" width="42" height="24"/><rect x="124" y="227" width="42" height="24"/><rect x="166" y="227" width="42" height="24"/><rect x="269" y="227" width="42" height="24"/><rect x="311" y="227" width="42" height="24"/><rect x="353" y="227" width="42" height="24"/></g></svg></div></div></div>
<div class="a" style="left:41.4px;top:530.5px;width:148px;height:32.00px;overflow:hidden;"><div class="a" style="left:0;top:0;width:148px;height:85px;border:1px solid #c4c7c5;border-radius:10.5px;background:#fff"></div><div class="a" style="left:1px;top:1px;width:146.00px;height:83.00px;border-radius:9.50px;overflow:hidden"><div class="a" style="left:2.70px;top:2.50px;width:501px;height:282px;transform:scale(0.2818,0.2775);transform-origin:0 0"><div class="a" style="left:0;top:0;width:501px;height:282px;background:#fff"></div><div class="a" style="left:2.5px;top:0px;width:370px;height:270px;background:#fff;border:7px solid #e5309a"></div><div class="a" style="left:10px;top:24.6px;width:356px;height:30px;background:#fde2f0"></div><div class="t" style="left:25px;top:30px;font-size:22px;color:#444;transform:scaleX(0.66);transform-origin:0 0">WHICH NUMBER IS THE HYPOTENUSE?</div><div class="t" style="left:30px;top:64px;font-size:9px;color:#888">DIRECTIONS: Circle which number is the hypotenuse, if each set shows 3 side</div><div class="t" style="left:130px;top:77px;font-size:9px;color:#888">lengths of a triangle.</div><svg style="left:380px;top:2.5px" width="110" height="50" viewBox="0 0 110 50"><defs><linearGradient id="cg3802f25fb8" gradientUnits="userSpaceOnUse" x1="0" y1="2" x2="0" y2="48"><stop offset="0" stop-color="#f9b6dc"/><stop offset="0.5" stop-color="#f25fb8"/><stop offset="1" stop-color="#fbf0a0"/></linearGradient></defs><g fill="url(#cg3802f25fb8)"><ellipse cx="55" cy="23" rx="50" ry="16"/><ellipse cx="27" cy="14" rx="16" ry="9.5"/><ellipse cx="52" cy="10" rx="20" ry="9"/><ellipse cx="82" cy="10" rx="20" ry="9.5"/><ellipse cx="11" cy="22.5" rx="11" ry="9.5"/><ellipse cx="99" cy="23" rx="11" ry="10"/><ellipse cx="28" cy="34" rx="22" ry="9"/><ellipse cx="62" cy="36" rx="26" ry="8.5"/><ellipse cx="89" cy="33" rx="16" ry="9"/><ellipse cx="44" cy="40" rx="20" ry="8.5"/><ellipse cx="66" cy="41" rx="15" ry="7.5"/></g></svg></div></div></div>
<div class="a" style="left:200.5px;top:218px;width:7.5px;height:193px;background:#dadce0;border-radius:4px;"></div>
<svg style="left:28px;top:590px" width="15" height="14" viewBox="0 0 15 14"><rect x="1" y="1" width="5" height="5" fill="none" stroke="#444746" stroke-width="1.6"/><rect x="9" y="1" width="5" height="5" fill="none" stroke="#444746" stroke-width="1.6"/><rect x="1" y="8.5" width="5" height="5" fill="none" stroke="#444746" stroke-width="1.6"/><rect x="9" y="8.5" width="5" height="5" fill="none" stroke="#444746" stroke-width="1.6"/></svg>
<svg style="left:77px;top:591px" width="8" height="12" viewBox="0 0 8 12"><path d="M6.5 1L1.8 6L6.5 11" fill="none" stroke="#444746" stroke-width="1.7"/></svg>
<div class="a" style="left:228px;top:232.7px;width:879px;height:1.5px;background:#d3d5d7;border-radius:0;"></div>
<div class="a" style="left:228px;top:233px;width:1px;height:311px;background:#d5d7d9;border-radius:0;"></div>
<div class="a" style="left:428px;top:233px;width:497px;height:1.2px;background:#8d8f91;border-radius:0;"></div>
<div class="a" style="left:228px;top:251px;width:1px;height:280.5px;background:#8d8f91;border-radius:0;"></div>
<svg style="left:426.9px;top:226px" width="500" height="8" viewBox="0 0 500 8"><g fill="#858789"><rect x="5.68" y="3.90" width="1.1" height="3.6"/><rect x="11.90" y="3.90" width="1.1" height="3.6"/><rect x="18.13" y="3.90" width="1.1" height="3.6"/><rect x="24.35" y="0.30" width="1.1" height="7.2"/><rect x="30.57" y="3.90" width="1.1" height="3.6"/><rect x="36.80" y="3.90" width="1.1" height="3.6"/><rect x="43.02" y="3.90" width="1.1" height="3.6"/><rect x="49.25" y="0.30" width="1.1" height="7.2"/><rect x="55.47" y="3.90" width="1.1" height="3.6"/><rect x="61.70" y="3.90" width="1.1" height="3.6"/><rect x="67.93" y="3.90" width="1.1" height="3.6"/><rect x="74.15" y="0.30" width="1.1" height="7.2"/><rect x="80.38" y="3.90" width="1.1" height="3.6"/><rect x="86.60" y="3.90" width="1.1" height="3.6"/><rect x="92.83" y="3.90" width="1.1" height="3.6"/><rect x="99.05" y="0.30" width="1.1" height="7.2"/><rect x="105.27" y="3.90" width="1.1" height="3.6"/><rect x="111.50" y="3.90" width="1.1" height="3.6"/><rect x="117.72" y="3.90" width="1.1" height="3.6"/><rect x="123.95" y="0.30" width="1.1" height="7.2"/><rect x="130.18" y="3.90" width="1.1" height="3.6"/><rect x="136.40" y="3.90" width="1.1" height="3.6"/><rect x="142.62" y="3.90" width="1.1" height="3.6"/><rect x="148.85" y="0.30" width="1.1" height="7.2"/><rect x="155.07" y="3.90" width="1.1" height="3.6"/><rect x="161.30" y="3.90" width="1.1" height="3.6"/><rect x="167.52" y="3.90" width="1.1" height="3.6"/><rect x="173.75" y="0.30" width="1.1" height="7.2"/><rect x="179.97" y="3.90" width="1.1" height="3.6"/><rect x="186.20" y="3.90" width="1.1" height="3.6"/><rect x="192.43" y="3.90" width="1.1" height="3.6"/><rect x="198.65" y="0.30" width="1.1" height="7.2"/><rect x="204.87" y="3.90" width="1.1" height="3.6"/><rect x="211.10" y="3.90" width="1.1" height="3.6"/><rect x="217.32" y="3.90" width="1.1" height="3.6"/><rect x="223.55" y="0.30" width="1.1" height="7.2"/><rect x="229.77" y="3.90" width="1.1" height="3.6"/><rect x="236.00" y="3.90" width="1.1" height="3.6"/><rect x="242.22" y="3.90" width="1.1" height="3.6"/><rect x="248.45" y="0.30" width="1.1" height="7.2"/><rect x="254.68" y="3.90" width="1.1" height="3.6"/><rect x="260.90" y="3.90" width="1.1" height="3.6"/><rect x="267.13" y="3.90" width="1.1" height="3.6"/><rect x="273.35" y="0.30" width="1.1" height="7.2"/><rect x="279.57" y="3.90" width="1.1" height="3.6"/><rect x="285.80" y="3.90" width="1.1" height="3.6"/><rect x="292.02" y="3.90" width="1.1" height="3.6"/><rect x="298.25" y="0.30" width="1.1" height="7.2"/><rect x="304.47" y="3.90" width="1.1" height="3.6"/><rect x="310.70" y="3.90" width="1.1" height="3.6"/><rect x="316.93" y="3.90" width="1.1" height="3.6"/><rect x="323.15" y="0.30" width="1.1" height="7.2"/><rect x="329.37" y="3.90" width="1.1" height="3.6"/><rect x="335.60" y="3.90" width="1.1" height="3.6"/><rect x="341.82" y="3.90" width="1.1" height="3.6"/><rect x="348.05" y="0.30" width="1.1" height="7.2"/><rect x="354.27" y="3.90" width="1.1" height="3.6"/><rect x="360.50" y="3.90" width="1.1" height="3.6"/><rect x="366.72" y="3.90" width="1.1" height="3.6"/><rect x="372.95" y="0.30" width="1.1" height="7.2"/><rect x="379.18" y="3.90" width="1.1" height="3.6"/><rect x="385.40" y="3.90" width="1.1" height="3.6"/><rect x="391.62" y="3.90" width="1.1" height="3.6"/><rect x="397.85" y="0.30" width="1.1" height="7.2"/><rect x="404.07" y="3.90" width="1.1" height="3.6"/><rect x="410.30" y="3.90" width="1.1" height="3.6"/><rect x="416.52" y="3.90" width="1.1" height="3.6"/><rect x="422.75" y="0.30" width="1.1" height="7.2"/><rect x="428.97" y="3.90" width="1.1" height="3.6"/><rect x="435.20" y="3.90" width="1.1" height="3.6"/><rect x="441.43" y="3.90" width="1.1" height="3.6"/><rect x="447.65" y="0.30" width="1.1" height="7.2"/><rect x="453.87" y="3.90" width="1.1" height="3.6"/><rect x="460.10" y="3.90" width="1.1" height="3.6"/><rect x="466.32" y="3.90" width="1.1" height="3.6"/><rect x="472.55" y="0.30" width="1.1" height="7.2"/><rect x="478.77" y="3.90" width="1.1" height="3.6"/><rect x="485.00" y="3.90" width="1.1" height="3.6"/><rect x="491.22" y="3.90" width="1.1" height="3.6"/></g></svg>
<svg style="left:219.5px;top:251px" width="9" height="290" viewBox="0 0 9 290"><g fill="#858789"><rect x="3.30" y="5.67" width="5.2" height="1.1"/><rect x="3.30" y="11.89" width="5.2" height="1.1"/><rect x="3.30" y="18.12" width="5.2" height="1.1"/><rect x="0.00" y="24.34" width="8.5" height="1.1"/><rect x="3.30" y="30.56" width="5.2" height="1.1"/><rect x="3.30" y="36.78" width="5.2" height="1.1"/><rect x="3.30" y="43.00" width="5.2" height="1.1"/><rect x="0.00" y="49.23" width="8.5" height="1.1"/><rect x="3.30" y="55.45" width="5.2" height="1.1"/><rect x="3.30" y="61.67" width="5.2" height="1.1"/><rect x="3.30" y="67.89" width="5.2" height="1.1"/><rect x="0.00" y="74.11" width="8.5" height="1.1"/><rect x="3.30" y="80.34" width="5.2" height="1.1"/><rect x="3.30" y="86.56" width="5.2" height="1.1"/><rect x="3.30" y="92.78" width="5.2" height="1.1"/><rect x="0.00" y="99.00" width="8.5" height="1.1"/><rect x="3.30" y="105.22" width="5.2" height="1.1"/><rect x="3.30" y="111.45" width="5.2" height="1.1"/><rect x="3.30" y="117.67" width="5.2" height="1.1"/><rect x="0.00" y="123.89" width="8.5" height="1.1"/><rect x="3.30" y="130.11" width="5.2" height="1.1"/><rect x="3.30" y="136.33" width="5.2" height="1.1"/><rect x="3.30" y="142.56" width="5.2" height="1.1"/><rect x="0.00" y="148.78" width="8.5" height="1.1"/><rect x="3.30" y="155.00" width="5.2" height="1.1"/><rect x="3.30" y="161.22" width="5.2" height="1.1"/><rect x="3.30" y="167.44" width="5.2" height="1.1"/><rect x="0.00" y="173.67" width="8.5" height="1.1"/><rect x="3.30" y="179.89" width="5.2" height="1.1"/><rect x="3.30" y="186.11" width="5.2" height="1.1"/><rect x="3.30" y="192.33" width="5.2" height="1.1"/><rect x="0.00" y="198.55" width="8.5" height="1.1"/><rect x="3.30" y="204.78" width="5.2" height="1.1"/><rect x="3.30" y="211.00" width="5.2" height="1.1"/><rect x="3.30" y="217.22" width="5.2" height="1.1"/><rect x="0.00" y="223.44" width="8.5" height="1.1"/><rect x="3.30" y="229.66" width="5.2" height="1.1"/><rect x="3.30" y="235.89" width="5.2" height="1.1"/><rect x="3.30" y="242.11" width="5.2" height="1.1"/><rect x="0.00" y="248.33" width="8.5" height="1.1"/><rect x="3.30" y="254.55" width="5.2" height="1.1"/><rect x="3.30" y="260.77" width="5.2" height="1.1"/><rect x="3.30" y="267.00" width="5.2" height="1.1"/><rect x="0.00" y="273.22" width="8.5" height="1.1"/><rect x="3.30" y="279.44" width="5.2" height="1.1"/></g></svg>
<div class="a" style="left:426px;top:250px;width:501px;height:282px"><div class="a" style="left:0;top:0;width:501px;height:282px;background:#fff;border:1px solid #cfcfcf"></div><div class="a" style="left:1px;top:0px;width:374px;height:281px;background:#50f5de"></div><div class="a" style="left:8px;top:9px;width:361px;height:263px;background:#fff;border:2.2px solid #111"></div><div class="a" style="left:10px;top:28px;width:356px;height:35.5px;background:#e3faf7"></div><div class="t" style="left:53.3px;top:32.1px;font-size:27px;color:#383838;transform:scaleX(0.575);transform-origin:0 0">PYTHAGOREAN THEOREM</div><div class="t" style="left:260px;top:33.9px;font-size:24px;color:#333;font-style:italic;transform:scaleX(0.885);transform-origin:0 0">activity</div><div class="t" style="left:54.9px;top:69.1px;font-size:11px;color:#555;-webkit-text-stroke:0.25px #555;transform:scaleX(0.72);transform-origin:0 0">DIRECTIONS:</div><div class="t" style="left:109.6px;top:69.1px;font-size:11px;color:#666;transform:scaleX(0.865);transform-origin:0 0">Label the right triangle with the correct vocabulary.</div><svg style="left:0;top:0" width="501" height="282" viewBox="0 0 501 282"><g stroke-miterlimit="2.5"><path d="M53.3 152.7V245H127.3Z" fill="none" stroke="#111" stroke-width="2"/><path d="M53.8 234.3H64V244.5" fill="none" stroke="#666" stroke-width="0.9"/><path d="M136.4 158.1L175.7 93.4L247.5 136.7" fill="none" stroke="#111" stroke-width="2"/><path d="M136.4 158.1L247.5 136.7" fill="none" stroke="#111" stroke-width="2"/><path d="M171.4 103.4L178.75 108L183.7 100" fill="none" stroke="#666" stroke-width="0.9"/><path d="M249.3 230.1L326.1 174.8L333.2 215" fill="none" stroke="#111" stroke-width="2"/><path d="M249.3 230.1L333.2 215" fill="none" stroke="#111" stroke-width="2"/><path d="M321.9 210.4L331.3 209.5M322.6 216.5L321.9 210.4" fill="none" stroke="#666" stroke-width="0.9"/></g></svg><svg style="left:379.7px;top:4.5px" width="110" height="50" viewBox="0 0 110 50"><defs><linearGradient id="cg379450e9d9" gradientUnits="userSpaceOnUse" x1="0" y1="2" x2="0" y2="48"><stop offset="0" stop-color="#d6f7f3"/><stop offset="0.5" stop-color="#50e9d9"/><stop offset="1" stop-color="#fafbc6"/></linearGradient></defs><g fill="url(#cg379450e9d9)"><ellipse cx="55" cy="23" rx="50" ry="16"/><ellipse cx="27" cy="14" rx="16" ry="9.5"/><ellipse cx="52" cy="10" rx="20" ry="9"/><ellipse cx="82" cy="10" rx="20" ry="9.5"/><ellipse cx="11" cy="22.5" rx="11" ry="9.5"/><ellipse cx="99" cy="23" rx="11" ry="10"/><ellipse cx="28" cy="34" rx="22" ry="9"/><ellipse cx="62" cy="36" rx="26" ry="8.5"/><ellipse cx="89" cy="33" rx="16" ry="9"/><ellipse cx="44" cy="40" rx="20" ry="8.5"/><ellipse cx="66" cy="41" rx="15" ry="7.5"/></g></svg><div class="t" style="left:397.3px;top:19.7px;font-size:18.5px;color:#2b4a47;transform:scaleX(0.675);transform-origin:0 0">DRAG THESE</div><div class="a" style="left:417.3px;top:57px;width:38.2px;height:18.8px;background:#fdfacb;border:1.4px solid #222;border-radius:1.5px"></div><div class="t" style="left:417.3px;top:60.43px;width:42.44px;text-align:center;font-size:12.4px;color:#1a1a1a;transform:scaleX(0.9);transform-origin:0 0">LEG</div><div class="a" style="left:397.6px;top:84.5px;width:91px;height:18.4px;background:#fdfacb;border:1.4px solid #222;border-radius:1.5px"></div><div class="t" style="left:397.6px;top:87.73px;width:101.11px;text-align:center;font-size:12.4px;color:#1a1a1a;transform:scaleX(0.9);transform-origin:0 0">HYPOTENUSE</div><div class="a" style="left:390.5px;top:111px;width:91.2px;height:19.7px;background:#fdfacb;border:1.4px solid #222;border-radius:1.5px"></div><div class="t" style="left:390.5px;top:114.88px;width:101.33px;text-align:center;font-size:12.4px;color:#1a1a1a;transform:scaleX(0.9);transform-origin:0 0">HYPOTENUSE</div><div class="a" style="left:397.5px;top:132.5px;width:91px;height:18.5px;background:#fdfacb;border:1.4px solid #222;border-radius:1.5px"></div><div class="t" style="left:397.5px;top:135.78px;width:101.11px;text-align:center;font-size:12.4px;color:#1a1a1a;transform:scaleX(0.9);transform-origin:0 0">HYPOTENUSE</div><div class="a" style="left:379.4px;top:153.5px;width:38.1px;height:18.7px;background:#fdfacb;border:1.4px solid #222;border-radius:1.5px"></div><div class="t" style="left:379.4px;top:156.88px;width:42.33px;text-align:center;font-size:12.4px;color:#1a1a1a;transform:scaleX(0.9);transform-origin:0 0">LEG</div><div class="a" style="left:408.7px;top:176.2px;width:38.2px;height:19.2px;background:#fdfacb;border:1.4px solid #222;border-radius:1.5px"></div><div class="t" style="left:408.7px;top:179.83px;width:42.44px;text-align:center;font-size:12.4px;color:#1a1a1a;transform:scaleX(0.9);transform-origin:0 0">LEG</div><div class="a" style="left:461.6px;top:190.9px;width:38.4px;height:18.7px;background:#fdfacb;border:1.4px solid #222;border-radius:1.5px"></div><div class="t" style="left:461.6px;top:194.28px;width:42.67px;text-align:center;font-size:12.4px;color:#1a1a1a;transform:scaleX(0.9);transform-origin:0 0">LEG</div><div class="a" style="left:408.7px;top:218.1px;width:38.2px;height:18.7px;background:#fdfacb;border:1.4px solid #222;border-radius:1.5px"></div><div class="t" style="left:408.7px;top:221.48px;width:42.44px;text-align:center;font-size:12.4px;color:#1a1a1a;transform:scaleX(0.9);transform-origin:0 0">LEG</div><div class="t" style="left:421.6px;top:263.6px;font-size:10.5px;color:#333;transform:scaleX(1.03);transform-origin:0 0">© Anna Colaric</div></div>
<div class="a" style="left:645px;top:549.5px;width:45px;height:1.3px;background:#777;border-radius:0;"></div>
<div class="a" style="left:1139px;top:252px;width:45.5px;height:185.5px;background:#eff2f5;border-radius:23px;"></div>
<div class="a" style="left:1138.5px;top:441px;width:45.5px;height:142.5px;background:#eff2f5;border-radius:23px;"></div>
<svg style="left:1154px;top:273px" width="15" height="13" viewBox="0 0 15 13"><rect x="1" y="1" width="13" height="11" rx="1" fill="none" stroke="#444746" stroke-width="1.6"/><path d="M3.5 4.6H8M3.5 7.8H8M10.5 3.8V9" stroke="#444746" stroke-width="1.6"/></svg>
<svg style="left:1153px;top:315px" width="16" height="16" viewBox="0 0 16 16"><rect x="4.5" y="1" width="10.5" height="10.5" rx="1" fill="none" stroke="#444746" stroke-width="1.5"/><circle cx="9.75" cy="6.25" r="2.3" fill="none" stroke="#444746" stroke-width="1.4"/><path d="M2 4.5V13.5C2 14.2 2.5 14.8 3.2 14.8H12" fill="none" stroke="#444746" stroke-width="1.5"/></svg>
<svg style="left:1153px;top:358px" width="16" height="16" viewBox="0 0 16 16"><path d="M8 2H1.5V14.5H13.5V9" fill="none" stroke="#444746" stroke-width="1.5"/><circle cx="11.5" cy="4" r="2.5" fill="none" stroke="#444746" stroke-width="1.4"/><path d="M13.3 5.8L15.3 7.8" stroke="#444746" stroke-width="1.4"/><path d="M3.5 12.5L6 9.5L8 11.5L9.5 10L11.5 12.5Z" fill="#444746"/></svg>
<svg style="left:1153px;top:401px" width="16" height="13" viewBox="0 0 16 13"><path d="M1 1.5H6L7.5 3.2H15V12H1Z" fill="none" stroke="#444746" stroke-width="1.5" stroke-linejoin="round"/><path d="M1 4.5H15" stroke="#444746" stroke-width="1.2"/></svg>
<svg style="left:1151px;top:459px" width="20" height="20" viewBox="0 0 20 20"><circle cx="10" cy="10" r="8.3" fill="none" stroke="#444746" stroke-width="1.8"/><circle cx="10" cy="10" r="5" fill="#444746"/></svg>
<svg style="left:1152px;top:504px" width="18" height="15" viewBox="0 0 18 15"><rect x="1" y="1" width="11.5" height="13" rx="1" fill="none" stroke="#444746" stroke-width="1.6"/><circle cx="6.75" cy="5.5" r="1.9" fill="#444746"/><path d="M3.3 11.5C3.5 9.6 4.8 8.7 6.75 8.7C8.7 8.7 10 9.6 10.2 11.5Z" fill="#444746"/><path d="M12.5 6L16.5 3.2V11.8L12.5 9Z" fill="#444746"/></svg>
<svg style="left:1153px;top:546px" width="16" height="16" viewBox="0 0 16 16"><rect x="1" y="1" width="14" height="14" rx="1" fill="none" stroke="#444746" stroke-width="1.6"/><path d="M5.5 4.2L11.5 8L5.5 11.8Z" fill="none" stroke="#444746" stroke-width="1.5" stroke-linejoin="round"/></svg>
<div class="a" style="left:1177px;top:584.5px;width:40px;height:40px;border-radius:50%;background:#fff;box-shadow:0 1px 3px rgba(0,0,0,0.25)"></div>
<svg style="left:1186px;top:599px" width="7" height="11" viewBox="0 0 7 11"><path d="M6 1L1.5 5.5L6 10" fill="none" stroke="#444746" stroke-width="1.6"/></svg>
<div class="a" style="left:228px;top:570px;width:880px;height:46px;background:#e9eef6;border-radius:8px;"></div>
<div class="t" style="left:244px;top:584.36px;font-size:14.1px;color:#1f1f1f;font-weight:normal;">Click to add speaker notes</div>
<div class="a" style="left:0px;top:632px;width:1200px;height:42px;background:#dce3e5;border-radius:0;"></div>
<div class="a" style="left:0px;top:631.5px;width:1200px;height:1px;background:#c8ced1;border-radius:0;"></div>
<div class="a" style="left:5px;top:637px;width:32px;height:32px;background:#ebeff1;border-radius:50%;"></div>
<svg style="left:14px;top:646px" width="14" height="14" viewBox="0 0 14 14"><circle cx="7" cy="7" r="5.6" fill="none" stroke="#111" stroke-width="2.2"/></svg>
<svg style="left:511.2px;top:637.9px" width="29.1" height="29.1" viewBox="4 4 40 40"><circle cx="24" cy="24.6" r="20" fill="#000" opacity="0.1"/><path d="M6.68 14A20 20 0 0 1 41.32 14L24 14A10 10 0 0 0 15.34 29Z" fill="#e0443a"/><path d="M41.32 14A20 20 0 0 1 24 44L32.66 29A10 10 0 0 0 24 14Z" fill="#fcc934"/><path d="M24 44A20 20 0 0 1 6.68 14L15.34 29A10 10 0 0 0 32.66 29Z" fill="#34a853"/><circle cx="24" cy="24" r="10" fill="#fff"/><circle cx="24" cy="24" r="8" fill="#1a73e8"/></svg>
<div class="a" style="left:520px;top:670.8px;width:12px;height:1.6px;background:#111;border-radius:1px;"></div>
<svg style="left:560.5px;top:638px" width="30" height="30" viewBox="0 0 30 30"><circle cx="15" cy="15.6" r="14.5" fill="#000" opacity="0.1"/><circle cx="15" cy="15" r="14.5" fill="#13898c"/><g transform="rotate(-7 15 15)"><rect x="5.5" y="9.5" width="19" height="13" rx="1" fill="#c9d3fb"/><rect x="6.5" y="8" width="19" height="13" rx="1" fill="#f1fbfb"/><rect x="8.5" y="10.5" width="7" height="6" fill="#13898c"/><path d="M17.5 11.5H23M17.5 14H23M17.5 16.5H23" stroke="#13898c" stroke-width="1.3"/></g></svg>
<svg style="left:610px;top:638px" width="30" height="30" viewBox="0 0 30 30"><circle cx="15" cy="15.6" r="14.5" fill="#000" opacity="0.1"/><circle cx="15" cy="15" r="14.5" fill="#ea4335"/><path d="M15.5 6.5C10 6.5 6 10.3 6 15C6 19.8 9.8 23.8 14.8 23.8C16.3 23.8 16.8 22.8 16.3 21.6C15.8 20.3 16.6 19 18.2 19H20.2C22.6 19 24.2 17.3 24.2 14.6C24.2 10 20.5 6.5 15.5 6.5Z" fill="#fff"/><circle cx="10.5" cy="14" r="1.4" fill="#f3a6e0"/><circle cx="12.5" cy="9.8" r="1.4" fill="#f48aa8"/><circle cx="17" cy="9.3" r="1.4" fill="#f3a6e0"/><circle cx="20.8" cy="12.3" r="1.4" fill="#f48aa8"/><path d="M14 12.5L21.5 23" stroke="#e9a0ff" stroke-width="1.5"/><path d="M13.6 12L15.3 14.2" stroke="#8b1a4a" stroke-width="1.8"/></svg>
<svg style="left:659px;top:638px" width="30" height="30" viewBox="0 0 30 30"><circle cx="15" cy="15.6" r="14.5" fill="#000" opacity="0.12"/><circle cx="15" cy="15" r="14.5" fill="#fff"/><path d="M8.2 6.5L16.5 14.75L8.2 23Z" fill="#4285f4"/><path d="M8.2 6.5L20.3 12.7L16.5 14.75Z" fill="#34a853"/><path d="M8.2 23L20.3 16.8L16.5 14.75Z" fill="#ea4335"/><path d="M20.3 12.7L24.4 14.75L20.3 16.8L16.5 14.75Z" fill="#fbbc04"/></svg>
<div class="a" style="left:892.5px;top:637.2px;width:31.5px;height:31.5px;background:#ebeff0;border-radius:50%;"></div>
<svg style="left:900px;top:645px" width="17" height="17" viewBox="0 0 17 17"><path d="M4.5 1.5H15V12H4.5Z" fill="none" stroke="#1f1f1f" stroke-width="1.5"/><path d="M2 4.5V14.5H12" fill="none" stroke="#1f1f1f" stroke-width="1.5"/><path d="M9.75 3.5V8.5M7.5 6.5L9.75 8.8L12 6.5" fill="none" stroke="#1f1f1f" stroke-width="1.6"/></svg>
<div class="a" style="left:931.3px;top:637.2px;width:31.5px;height:31.5px;background:#ebeff0;border-radius:50%;"></div>
<svg style="left:941px;top:645px" width="12" height="17" viewBox="0 0 12 17"><rect x="3.5" y="1" width="5" height="9" rx="2.5" fill="none" stroke="#1f1f1f" stroke-width="1.6"/><path d="M1.2 7.5A4.8 4.8 0 0 0 10.8 7.5M6 12.3V15.5" fill="none" stroke="#1f1f1f" stroke-width="1.6"/></svg>
<div class="a" style="left:970px;top:637.2px;width:37px;height:31.5px;background:#ebeff0;border-radius:16px 4px 4px 16px;"></div>
<div class="a" style="left:980.3px;top:645px;width:15.8px;height:15.8px;background:#1f1f1f;border-radius:50%;"></div>
<div class="t" style="left:985.2px;top:648.33px;font-size:10px;color:#fff;font-weight:normal;"><b>1</b></div>
<div class="a" style="left:1010.5px;top:637.2px;width:53px;height:31.5px;background:#ebeff0;border-radius:4px;"></div>
<div class="t" style="left:1021.5px;top:647.10px;font-size:12.4px;color:#1f1f1f;font-weight:normal;transform:scaleX(0.97);transform-origin:0 0;-webkit-text-stroke:0.3px #1f1f1f">Mar 1</div>
<div class="a" style="left:1067.5px;top:637.2px;width:127.5px;height:31.5px;background:#ebeff0;border-radius:4px 16px 16px 4px;"></div>
<div class="t" style="left:1079.4px;top:647.10px;font-size:12.4px;color:#1f1f1f;font-weight:normal;transform:scaleX(0.975);transform-origin:0 0;-webkit-text-stroke:0.3px #1f1f1f">10:51 EXTD</div>
<svg style="left:1154px;top:648px" width="13" height="10" viewBox="0 0 13 10"><path d="M6.5 9.5L0.5 2.5A9.5 9.5 0 0 1 12.5 2.5Z" fill="#1f1f1f"/></svg>
<svg style="left:1175px;top:646px" width="8" height="13" viewBox="0 0 8 13"><rect x="2.6" y="0.3" width="2.8" height="1.8" fill="#1f1f1f"/><rect x="1" y="1.8" width="6" height="10.7" rx="1" fill="none" stroke="#1f1f1f" stroke-width="1.3"/><rect x="1" y="6" width="6" height="6.5" fill="#1f1f1f"/></svg>
</body></html>
